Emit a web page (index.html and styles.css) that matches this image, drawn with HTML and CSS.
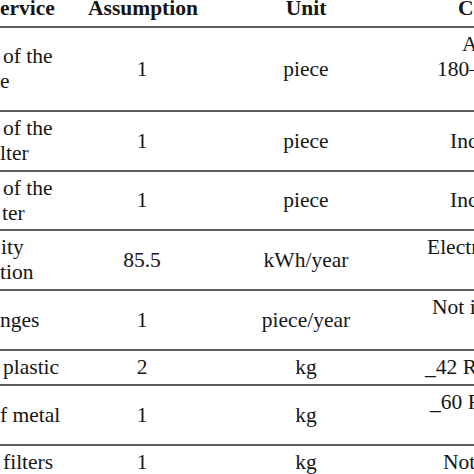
FILE: index.html
```html
<!DOCTYPE html>
<html>
<head>
<meta charset="utf-8">
<link rel="stylesheet" href="styles.css">
</head>
<body>
<div class="tbl">
  <div class="row head">
    <div class="c1"><div class="ln">ervice</div></div>
    <div class="c2">Assumption</div>
    <div class="c3">Unit</div>
    <div class="c4"><div class="ln p42">Cost</div></div>
  </div>
  <div class="row h84">
    <div class="c1"><div class="ln p3">of the</div><div class="ln">e</div></div>
    <div class="c2">1</div>
    <div class="c3">piece</div>
    <div class="c4"><div class="ln p46">Assumed</div><div class="ln p21">180–200 EUR</div><div class="ln">&nbsp;</div></div>
  </div>
  <div class="row h60">
    <div class="c1"><div class="ln p3">of the</div><div class="ln">lter</div></div>
    <div class="c2">1</div>
    <div class="c3">piece</div>
    <div class="c4"><div class="ln p34">Included</div></div>
  </div>
  <div class="row h59">
    <div class="c1"><div class="ln p3">of the</div><div class="ln p2">ter</div></div>
    <div class="c2">1</div>
    <div class="c3">piece</div>
    <div class="c4"><div class="ln p34">Included</div></div>
  </div>
  <div class="row h60">
    <div class="c1"><div class="ln p1">ity</div><div class="ln">tion</div></div>
    <div class="c2">85.5</div>
    <div class="c3">kWh/year</div>
    <div class="c4"><div class="ln p11">Electricity</div><div class="ln">&nbsp;</div></div>
  </div>
  <div class="row h60">
    <div class="c1"><div class="ln">nges</div></div>
    <div class="c2">1</div>
    <div class="c3">piece/year</div>
    <div class="c4"><div class="ln p16">Not included</div><div class="ln">&nbsp;</div></div>
  </div>
  <div class="row h35">
    <div class="c1"><div class="ln p3">plastic</div></div>
    <div class="c2">2</div>
    <div class="c3">kg</div>
    <div class="c4"><div class="ln p9">_42 Recycling</div></div>
  </div>
  <div class="row h60">
    <div class="c1"><div class="ln">f metal</div></div>
    <div class="c2">1</div>
    <div class="c3">kg</div>
    <div class="c4"><div class="ln p14">_60 Recycling</div><div class="ln">&nbsp;</div></div>
  </div>
  <div class="row h35">
    <div class="c1"><div class="ln p3">filters</div></div>
    <div class="c2">1</div>
    <div class="c3">kg</div>
    <div class="c4"><div class="ln p27">Not</div></div>
  </div>
</div>
</body>
</html>
```

FILE: styles.css
```css
html, body {
  margin: 0;
  padding: 0;
  background: #ffffff;
  overflow: hidden;
}
body {
  width: 474px;
  height: 474px;
  font-family: "Liberation Serif", "DejaVu Serif", serif;
  font-size: 21.5px;
  line-height: 25px;
  color: #161616;
}
.tbl {
  width: 474px;
  overflow: hidden;
}
.row {
  display: grid;
  grid-template-columns: 88px 108px 220px 58px;
  align-items: center;
  box-sizing: border-box;
  border-top: 2px solid #5e5e5e;
}
.row.head {
  border-top: none;
  height: 26px;
  align-items: start;
  font-weight: bold;
  line-height: 17px;
}
.h84 { height: 84px; }
.h60 { height: 60px; }
.h59 { height: 59px; }
.h35 { height: 35px; }
.c1, .c4 {
  overflow: hidden;
  white-space: nowrap;
}
.c2, .c3 {
  text-align: center;
  white-space: nowrap;
}
.ln { white-space: nowrap; }
.p1 { padding-left: 1px; }
.p2 { padding-left: 2px; }
.p3 { padding-left: 3px; }
.p9 { padding-left: 9px; }
.p11 { padding-left: 11px; }
.p14 { padding-left: 14px; }
.p16 { padding-left: 16px; }
.p21 { padding-left: 21px; }
.p27 { padding-left: 27px; }
.p34 { padding-left: 34px; }
.p42 { padding-left: 42px; }
.p46 { padding-left: 46px; }
```
